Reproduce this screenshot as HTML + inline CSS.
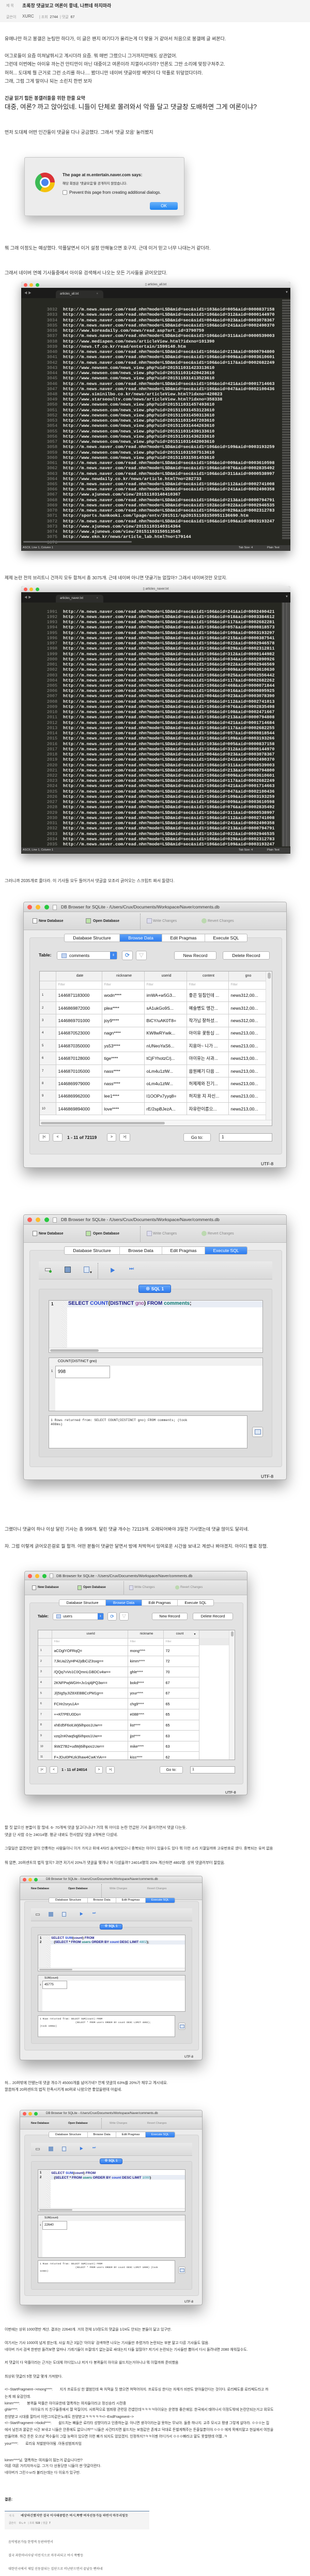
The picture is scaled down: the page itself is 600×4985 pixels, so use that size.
<!DOCTYPE html>
<html><head><meta charset="utf-8">
<style>
*{margin:0;padding:0;box-sizing:border-box}
html,body{width:600px;height:4985px;background:#fff;overflow:hidden}
body{position:relative;font-family:"Liberation Sans","Noto Sans CJK KR",sans-serif;color:#222}
.a{position:absolute}
.t{position:absolute;left:9px;white-space:nowrap;color:#333;line-height:1}
.term{position:absolute;left:41px;width:521px;background:#272822;border-radius:4px 4px 0 0;box-shadow:0 8px 20px rgba(0,0,0,.4);overflow:hidden}
.ttl{position:absolute;left:0;top:0;width:100%;height:12px;background:linear-gradient(#ececec,#d6d6d6);font-size:6px;color:#444;text-align:center;line-height:12px}
.lt{position:absolute;border-radius:50%}
.tabbar{position:absolute;left:0;top:12px;width:100%;height:20px;background:#1b1b1a}
.tab{position:absolute;left:67px;top:5px;width:92px;height:15px;background:#2d2d2b;border-radius:5px 5px 0 0;font-size:6px;color:#ddd;line-height:15px;padding-left:8px}
.code{position:absolute;left:0;top:32px;font-family:"Liberation Mono",monospace;font-size:8.43px;line-height:10.24px;white-space:pre;font-weight:bold}
.ln{position:absolute;left:0;width:70px;text-align:right;color:#8f908a;font-family:"Liberation Mono",monospace;font-size:8.43px;line-height:10.24px;white-space:pre;font-weight:normal}
.tx{position:absolute;left:81px;color:#f4f4ee}
.mini{position:absolute;left:505px;width:47px;background:repeating-linear-gradient(#6a6a66 0 1px,#3a3a37 1px 2px,#55554f 2px 3px,#2a2a28 3px 5px)}
.status{position:absolute;left:0;width:100%;height:11px;background:#3c3c3a;color:#ddd;font-size:5.5px;line-height:11px}
.win{position:absolute;background:#ececec;border:1px solid #b0b0b0;border-radius:4px;box-shadow:0 12px 28px rgba(0,0,0,.38);overflow:hidden;color:#111}
.wt{position:absolute;left:0;top:0;width:100%;background:linear-gradient(#ebebeb,#d5d5d5);border-bottom:1px solid #b8b8b8;color:#333;white-space:nowrap}
.wb{position:absolute;left:0;width:100%;background:linear-gradient(#e8e8e8,#d9d9d9);border-bottom:1px solid #bdbdbd;white-space:nowrap}
.panel{position:absolute;background:#e2e2e2;border:1px solid #d2d2d2;border-radius:4px}
.tabs{position:absolute;display:flex;border:1px solid #b9b9b9;border-radius:3px;background:#fff;overflow:hidden;white-space:nowrap}
.tabs div{border-right:1px solid #c8c8c8;text-align:center;color:#111}
.tabs .on{background:linear-gradient(#5ea1f7,#2d7cf0);color:#fff}
.btn{position:absolute;background:#fff;border:1px solid #b5b5b5;border-radius:3px;text-align:center;color:#111;white-space:nowrap}
.grid{position:absolute;background:#fff;border:1px solid #aaa;overflow:hidden}
table{border-collapse:collapse;table-layout:fixed}
td,th{border-right:1px solid #cfcfcf;border-bottom:1px solid #cfcfcf;white-space:nowrap;overflow:hidden;text-align:left;font-weight:normal;padding-left:4px}
th{background:#f1f1f1;text-align:center;color:#222}
.rn{background:#f3f3f3;color:#222}
.fl{color:#aaa;background:#fff}
.box{position:absolute;background:#fff;border:1px solid #a9a9a9}
.gut{position:absolute;top:0;height:100%;background:#efefef}
.hatch{position:absolute;top:0;height:100%;background:repeating-linear-gradient(45deg,#e6e6e6 0 1px,#f3f3f3 1px 3px)}
.kw{color:#1b1b86;font-weight:bold}.fn{color:#1f3fcf;font-weight:bold}.pu{color:#7d1a7d}.tl{color:#0f7a72;font-weight:bold}
.pill{position:absolute;background:linear-gradient(#64a6f8,#2f7bef);border:1px solid #2a66c8;border-radius:3px;color:#fff;font-weight:bold;text-align:center;white-space:nowrap}
.mono{font-family:"Liberation Mono",monospace;color:#333;white-space:pre}
</style></head><body>

<!-- header -->
<div class="a" style="left:0;top:0;width:600px;height:43px;background:#f4f4f4"></div>
<div class="t" style="left:12px;top:8px;font-size:7px;color:#999">제 목</div>
<div class="t" style="left:43px;top:7px;font-size:9px;font-weight:bold;color:#333">초록창 댓글보고 여론이 좋네, 나쁘네 하지마라</div>
<div class="t" style="left:12px;top:30px;font-size:7px;color:#999">글쓴이</div>
<div class="t" style="left:43px;top:28px;font-size:8px;color:#555">XURC</div>
<div class="t" style="left:76px;top:30px;font-size:7px;color:#999">| 조회 &nbsp;<span style="color:#444">2744</span> &nbsp;| 댓글 &nbsp;<span style="color:#444">67</span></div>

<div class="t" style="top:71px;font-size:9px">유애나만 하고 봉갤은 눈팅만 하다가, 이 글은 왠지 여기다가 올리는게 더 맞을 거 같아서 처음으로 봉갤에 글 써본다.</div>
<div class="t" style="top:104px;font-size:9px">어그로들이 요즘 미쳐날뛰시고 계시더라 요즘. 뭐 매번 그랬으니 그거까지만해도 상관없어.</div>
<div class="t" style="top:120px;font-size:9px">그런데 이번에는 아이유 까는건 안티만이 아닌 대중이고 여론이라 지껄이시더라? 언론도 그딴 소리에 맞장구쳐주고.</div>
<div class="t" style="top:137px;font-size:9px">허허... 도대체 뭘 근거로 그런 소리를 하나.... 봤더니만 네이버 댓글이랑 베댓이 다 악플로 뒤덮었다더라.</div>
<div class="t" style="top:153px;font-size:9px">그래, 그럼 그게 말이나 되는 소린지 한번 보자</div>
<div class="t" style="top:186px;font-size:9px;font-weight:bold">긴글 읽기 힘든 봉갤러들을 위한 한줄 요약</div>
<div class="t" style="top:201px;font-size:12.5px;color:#222">대중, 여론? 까고 앉아있네. 니들이 단체로 몰려와서 악플 달고 댓글창 도배하면 그게 여론이냐?</div>
<div class="t" style="top:252px;font-size:9px">먼저 도대체 어떤 인간들이 댓글을 다나 궁금했다. 그래서 '댓글 모음' 눌러봤지</div>

<!-- chrome dialog -->
<div class="a" style="left:47px;top:304px;width:310px;height:114px;background:#ececec;border:1px solid #c5c5c5;border-radius:3px;box-shadow:0 10px 22px rgba(0,0,0,.3)">
  <div class="a" style="left:20px;top:29px;width:38px;height:38px;border-radius:50%;background:conic-gradient(from -30deg,#db3236 0 120deg,#f4c20d 120deg 240deg,#3cba54 240deg 360deg)"></div>
  <div class="a" style="left:29px;top:38px;width:20px;height:20px;border-radius:50%;background:#fff"></div>
  <div class="a" style="left:32px;top:41px;width:14px;height:14px;border-radius:50%;background:#4885ed"></div>
  <div class="a" style="left:73px;top:29px;font-size:8px;font-weight:bold;white-space:nowrap">The page at m.entertain.naver.com says:</div>
  <div class="a" style="left:73px;top:44px;font-size:6.5px;white-space:nowrap">해당 회원은 '댓글모음'을 공개하지 않았습니다.</div>
  <div class="a" style="left:73px;top:63px;width:9px;height:9px;background:#fff;border:1px solid #999;border-radius:2px"></div>
  <div class="a" style="left:86px;top:63px;font-size:8px;white-space:nowrap;color:#222">Prevent this page from creating additional dialogs.</div>
  <div class="a" style="left:242px;top:86px;width:54px;height:15px;background:linear-gradient(#6cb3fa,#1f84f0);border-radius:3px;color:#fff;font-size:8px;text-align:center;line-height:15px">OK</div>
</div>

<div class="t" style="top:476px;font-size:9px">뭐 그래 이정도는 예상했다. 악플달면서 이거 설정 안해놓으면 호구지. 근데 이거 믿고 너무 나대는거 같더라.</div>
<div class="t" style="top:524px;font-size:9px">그래서 네이버 연예 기사들중에서 아이유 검색해서 나오는 모든 기사들을 긁어모았다.</div>

<!-- terminal 1 -->
<div class="term" style="top:545px;height:521px">
  <div class="ttl">▯ articles_all.txt</div>
  <div class="lt" style="left:5px;top:2.5px;width:7px;height:7px;background:#fc5f57"></div>
  <div class="lt" style="left:16px;top:2.5px;width:7px;height:7px;background:#fdbc2e"></div>
  <div class="lt" style="left:28px;top:2.5px;width:7px;height:7px;background:#28c840"></div>
  <div class="tabbar"><div class="a" style="left:6px;top:5px;color:#888;font-size:6px">◀ ▶</div><div class="tab">articles_all.txt<span style="position:absolute;right:10px;color:#888">×</span></div><div class="a" style="right:4px;top:6px;color:#aaa;font-size:6px">▼</div></div>
  <div class="mini" style="top:35px;height:464px"></div>
  <div class="code" style="top:39px">
<div class="ln">3032
3033
3034
3035
3036
3037
3038
3039
3040
3041
3042
3043
3044
3045
3046
3047
3048
3049
3050
3051
3052
3053
3054
3055
3056
3057
3058
3059
3060
3061
3062
3063
3064
3065
3066
3067
3068
3069
3070
3071
3072
3073
3074
3075
3076</div><div class="tx">http://m.news.naver.com/read.nhn?mode=LSD&amp;mid=sec&amp;sid1=103&amp;oid=005&amp;aid=0000837158
http://m.news.naver.com/read.nhn?mode=LSD&amp;mid=sec&amp;sid1=106&amp;oid=312&amp;aid=0000144970
http://m.news.naver.com/read.nhn?mode=LSD&amp;mid=sec&amp;sid1=004&amp;oid=023&amp;aid=0003078367
http://m.news.naver.com/read.nhn?mode=LSD&amp;mid=sec&amp;sid1=106&amp;oid=241&amp;aid=0002490370
http://www.koreadaily.com/news/read.asp?art_id=3790759
http://m.news.naver.com/read.nhn?mode=LSD&amp;mid=sec&amp;sid1=106&amp;oid=311&amp;aid=0000539003
http://www.mediapen.com/news/articleView.html?idxno=101390
http://news.tf.co.kr/read/entertain/1599140.htm
http://m.news.naver.com/read.nhn?mode=LSD&amp;mid=sec&amp;sid1=106&amp;oid=213&amp;aid=0000794800
http://m.news.naver.com/read.nhn?mode=LSD&amp;mid=sec&amp;sid1=106&amp;oid=009&amp;aid=0003610601
http://m.news.naver.com/read.nhn?mode=LSD&amp;mid=sec&amp;sid1=106&amp;oid=117&amp;aid=0002682249
http://www.newsen.com/news_view.php?uid=201511031423313610
http://www.newsen.com/news_view.php?uid=201511031420423610
http://www.newsen.com/news_view.php?uid=201511031413523610
http://m.news.naver.com/read.nhn?mode=LSD&amp;mid=sec&amp;sid1=106&amp;oid=421&amp;aid=0001714663
http://m.news.naver.com/read.nhn?mode=LSD&amp;mid=sec&amp;sid1=106&amp;oid=047&amp;aid=0002100436
http://www.siminilbo.co.kr/news/articleView.html?idxno=420823
http://www.starseoultv.com/news/articleView.html?idxno=358338
http://www.newsen.com/news_view.php?uid=201511031457493610
http://www.newsen.com/news_view.php?uid=201511031453123610
http://www.newsen.com/news_view.php?uid=201511031450313610
http://www.newsen.com/news_view.php?uid=201511031447203610
http://www.newsen.com/news_view.php?uid=201511031444263610
http://www.newsen.com/news_view.php?uid=201511031439133610
http://www.newsen.com/news_view.php?uid=201511031436233610
http://www.newsen.com/news_view.php?uid=201511031442003610
http://m.news.naver.com/read.nhn?mode=LSD&amp;mid=sec&amp;sid1=106&amp;oid=109&amp;aid=0003193259
http://www.newsen.com/news_view.php?uid=201511031507513610
http://www.newsen.com/news_view.php?uid=201511031501453610
http://m.news.naver.com/read.nhn?mode=LSD&amp;mid=sec&amp;sid1=106&amp;oid=009&amp;aid=0003610598
http://m.news.naver.com/read.nhn?mode=LSD&amp;mid=sec&amp;sid1=106&amp;oid=076&amp;aid=0002835492
http://m.news.naver.com/read.nhn?mode=LSD&amp;mid=sec&amp;sid1=106&amp;oid=311&amp;aid=0000538997
http://www.newdaily.co.kr/news/article.html?no=282733
http://m.news.naver.com/read.nhn?mode=LSD&amp;mid=sec&amp;sid1=106&amp;oid=112&amp;aid=0002741008
http://m.news.naver.com/read.nhn?mode=LSD&amp;mid=sec&amp;sid1=106&amp;oid=241&amp;aid=0002490358
http://www.ajunews.com/view/20151103140410367
http://m.news.naver.com/read.nhn?mode=LSD&amp;mid=sec&amp;sid1=106&amp;oid=213&amp;aid=0000794791
http://m.news.naver.com/read.nhn?mode=LSD&amp;mid=sec&amp;sid1=102&amp;oid=022&amp;aid=0002946535
http://m.news.naver.com/read.nhn?mode=LSD&amp;mid=sec&amp;sid1=106&amp;oid=029&amp;aid=0002312783
http://sports.hankooki.com/lpage/entv/201511/sp20151103150951136690.htm
http://m.news.naver.com/read.nhn?mode=LSD&amp;mid=sec&amp;sid1=106&amp;oid=109&amp;aid=0003193247
http://www.ajunews.com/view/20151103140314364
http://www.ajunews.com/view/20151103150513545
http://www.ekn.kr/news/article_lab.html?no=179144
</div></div>
  <div class="a" style="left:4px;top:502px;width:210px;height:3px;background:#666;border-radius:2px"></div>
  <div class="status" style="top:510px"><span style="margin-left:3px">ASCII, Line 1, Column 1</span><span class="a" style="left:421px">Tab Size: 4</span><span class="a" style="left:476px">Plain Text</span></div>
</div>

<div class="t" style="top:1114px;font-size:8.6px">제제 논란 전의 브리트니 건까지 모두 합쳐서 총 3075개. 근데 네이버 아니면 댓글기능 없잖아? 그래서 네이버것만 모았지.</div>

<!-- terminal 2 -->
<div class="term" style="top:1134px;height:518px">
  <div class="ttl">▯ articles_naver.txt</div>
  <div class="lt" style="left:5px;top:2.5px;width:7px;height:7px;background:#fc5f57"></div>
  <div class="lt" style="left:16px;top:2.5px;width:7px;height:7px;background:#fdbc2e"></div>
  <div class="lt" style="left:28px;top:2.5px;width:7px;height:7px;background:#28c840"></div>
  <div class="tabbar"><div class="a" style="left:6px;top:5px;color:#888;font-size:6px">◀ ▶</div><div class="tab">articles_naver.txt<span style="position:absolute;right:10px;color:#888">×</span></div><div class="a" style="right:4px;top:6px;color:#aaa;font-size:6px">▼</div></div>
  <div class="mini" style="top:32px;height:472px;background:repeating-linear-gradient(90deg,#777 0 1px,#3a3a37 1px 3px,#999 3px 4px,#2e2e2c 4px 6px)"></div>
  <div class="code" style="top:34.5px">
<div class="ln">1991
1992
1993
1994
1995
1996
1997
1998
1999
2000
2001
2002
2003
2004
2005
2006
2007
2008
2009
2010
2011
2012
2013
2014
2015
2016
2017
2018
2019
2020
2021
2022
2023
2024
2025
2026
2027
2028
2029
2030
2031
2032
2033
2034
2035
2036</div><div class="tx">http://m.news.naver.com/read.nhn?mode=LSD&amp;mid=sec&amp;sid1=106&amp;oid=241&amp;aid=0002490421
http://m.news.naver.com/read.nhn?mode=LSD&amp;mid=sec&amp;sid1=106&amp;oid=018&amp;aid=0003384612
http://m.news.naver.com/read.nhn?mode=LSD&amp;mid=sec&amp;sid1=106&amp;oid=117&amp;aid=0002682281
http://m.news.naver.com/read.nhn?mode=LSD&amp;mid=sec&amp;sid1=106&amp;oid=057&amp;aid=0000818573
http://m.news.naver.com/read.nhn?mode=LSD&amp;mid=sec&amp;sid1=106&amp;oid=109&amp;aid=0003193297
http://m.news.naver.com/read.nhn?mode=LSD&amp;mid=sec&amp;sid1=106&amp;oid=215&amp;aid=0000387541
http://m.news.naver.com/read.nhn?mode=LSD&amp;mid=sec&amp;sid1=106&amp;oid=022&amp;aid=0002946578
http://m.news.naver.com/read.nhn?mode=LSD&amp;mid=sec&amp;sid1=106&amp;oid=029&amp;aid=0002312811
http://m.news.naver.com/read.nhn?mode=LSD&amp;mid=sec&amp;sid1=106&amp;oid=312&amp;aid=0000144982
http://m.news.naver.com/read.nhn?mode=LSD&amp;mid=sec&amp;sid1=103&amp;oid=034&amp;aid=0002890926
http://m.news.naver.com/read.nhn?mode=LSD&amp;mid=sec&amp;sid1=106&amp;oid=022&amp;aid=0002946569
http://m.news.naver.com/read.nhn?mode=LSD&amp;mid=sec&amp;sid1=106&amp;oid=009&amp;aid=0003610630
http://m.news.naver.com/read.nhn?mode=LSD&amp;mid=sec&amp;sid1=106&amp;oid=025&amp;aid=0002556442
http://m.news.naver.com/read.nhn?mode=LSD&amp;mid=sec&amp;sid1=106&amp;oid=117&amp;aid=0002682262
http://m.news.naver.com/read.nhn?mode=LSD&amp;mid=sec&amp;sid1=106&amp;oid=468&amp;aid=0000071844
http://m.news.naver.com/read.nhn?mode=LSD&amp;mid=sec&amp;sid1=106&amp;oid=016&amp;aid=0000895925
http://m.news.naver.com/read.nhn?mode=LSD&amp;mid=sec&amp;sid1=004&amp;oid=023&amp;aid=0003078390
http://m.news.naver.com/read.nhn?mode=LSD&amp;mid=sec&amp;sid1=106&amp;oid=112&amp;aid=0002741013
http://m.news.naver.com/read.nhn?mode=LSD&amp;mid=sec&amp;sid1=106&amp;oid=076&amp;aid=0002835498
http://m.news.naver.com/read.nhn?mode=LSD&amp;mid=sec&amp;sid1=106&amp;oid=108&amp;aid=0002471667
http://m.news.naver.com/read.nhn?mode=LSD&amp;mid=sec&amp;sid1=106&amp;oid=213&amp;aid=0000794808
http://m.news.naver.com/read.nhn?mode=LSD&amp;mid=sec&amp;sid1=106&amp;oid=421&amp;aid=0001714684
http://m.news.naver.com/read.nhn?mode=LSD&amp;mid=sec&amp;sid1=106&amp;oid=117&amp;aid=0002682255
http://m.news.naver.com/read.nhn?mode=LSD&amp;mid=sec&amp;sid1=106&amp;oid=057&amp;aid=0000818544
http://m.news.naver.com/read.nhn?mode=LSD&amp;mid=sec&amp;sid1=106&amp;oid=109&amp;aid=0003193266
http://m.news.naver.com/read.nhn?mode=LSD&amp;mid=sec&amp;sid1=103&amp;oid=005&amp;aid=0000837158
http://m.news.naver.com/read.nhn?mode=LSD&amp;mid=sec&amp;sid1=106&amp;oid=312&amp;aid=0000144970
http://m.news.naver.com/read.nhn?mode=LSD&amp;mid=sec&amp;sid1=004&amp;oid=023&amp;aid=0003078367
http://m.news.naver.com/read.nhn?mode=LSD&amp;mid=sec&amp;sid1=106&amp;oid=241&amp;aid=0002490370
http://m.news.naver.com/read.nhn?mode=LSD&amp;mid=sec&amp;sid1=106&amp;oid=311&amp;aid=0000539003
http://m.news.naver.com/read.nhn?mode=LSD&amp;mid=sec&amp;sid1=106&amp;oid=213&amp;aid=0000794800
http://m.news.naver.com/read.nhn?mode=LSD&amp;mid=sec&amp;sid1=106&amp;oid=009&amp;aid=0003610601
http://m.news.naver.com/read.nhn?mode=LSD&amp;mid=sec&amp;sid1=106&amp;oid=117&amp;aid=0002682249
http://m.news.naver.com/read.nhn?mode=LSD&amp;mid=sec&amp;sid1=106&amp;oid=421&amp;aid=0001714663
http://m.news.naver.com/read.nhn?mode=LSD&amp;mid=sec&amp;sid1=106&amp;oid=047&amp;aid=0002100436
http://m.news.naver.com/read.nhn?mode=LSD&amp;mid=sec&amp;sid1=106&amp;oid=109&amp;aid=0003193259
http://m.news.naver.com/read.nhn?mode=LSD&amp;mid=sec&amp;sid1=106&amp;oid=009&amp;aid=0003610598
http://m.news.naver.com/read.nhn?mode=LSD&amp;mid=sec&amp;sid1=106&amp;oid=076&amp;aid=0002835492
http://m.news.naver.com/read.nhn?mode=LSD&amp;mid=sec&amp;sid1=106&amp;oid=311&amp;aid=0000538997
http://m.news.naver.com/read.nhn?mode=LSD&amp;mid=sec&amp;sid1=106&amp;oid=112&amp;aid=0002741008
http://m.news.naver.com/read.nhn?mode=LSD&amp;mid=sec&amp;sid1=106&amp;oid=241&amp;aid=0002490358
http://m.news.naver.com/read.nhn?mode=LSD&amp;mid=sec&amp;sid1=106&amp;oid=213&amp;aid=0000794791
http://m.news.naver.com/read.nhn?mode=LSD&amp;mid=sec&amp;sid1=102&amp;oid=022&amp;aid=0002946535
http://m.news.naver.com/read.nhn?mode=LSD&amp;mid=sec&amp;sid1=106&amp;oid=029&amp;aid=0002312783
http://m.news.naver.com/read.nhn?mode=LSD&amp;mid=sec&amp;sid1=106&amp;oid=109&amp;aid=0003193247
</div></div>
  <div class="status" style="top:506px"><span style="margin-left:3px">ASCII, Line 1, Column 1</span><span class="a" style="left:421px">Tab Size: 4</span><span class="a" style="left:476px">Plain Text</span></div>
</div>

<div class="t" style="top:1701px;font-size:8px">그러니까 2035개로 줄더라. 이 기사들 모두 들어가서 댓글을 모조리 긁어오는 스크립트 짜서 돌렸다.</div>

<!-- DB window 1 : browse comments -->
<div class="win" style="left:45px;top:1745px;width:510px;height:515px">
  <div class="wt" style="height:19px;font-size:8.5px;line-height:19px"><span class="a" style="left:72px">DB Browser for SQLite - /Users/Crux/Documents/Workspace/Naver/comments.db</span></div>
  <div class="lt" style="left:7px;top:5px;width:9px;height:9px;background:#fc5f57"></div>
  <div class="lt" style="left:23px;top:5px;width:9px;height:9px;background:#fdbc2e"></div>
  <div class="lt" style="left:40px;top:5px;width:9px;height:9px;background:#28c840"></div>
  <div class="a" style="left:56px;top:5px;width:8px;height:10px;background:#fff;border:1px solid #aaa"></div>
  <div class="wb" style="top:19px;height:35px;font-size:7px;line-height:35px;font-weight:bold;color:#222">
    <span class="a" style="left:17px;top:12px;width:9px;height:10px;border:1px solid #888;background:#fff"></span><span class="a" style="left:29px">New Database</span>
    <span class="a" style="left:120px;top:12px;width:10px;height:10px;border:1px solid #888;background:#bde3a8"></span><span class="a" style="left:134px">Open Database</span>
    <span class="a" style="left:225px;top:3px;height:30px;border-left:1px dotted #999"></span>
    <span class="a" style="left:238px;top:12px;width:10px;height:10px;border:1px solid #aab;background:#dde"></span><span class="a" style="left:250px;color:#888;font-weight:normal">Write Changes</span>
    <span class="a" style="left:344px;top:12px;width:10px;height:10px;border-radius:50%;background:#bcd9b0"></span><span class="a" style="left:356px;color:#888;font-weight:normal">Revert Changes</span>
  </div>
  <div class="panel" style="left:11px;top:68px;width:489px;height:420px"></div>
  <div class="tabs" style="left:78px;top:61px;height:16px;font-size:8.5px;line-height:14px"><div style="width:107px">Database Structure</div><div class="on" style="width:82px">Browse Data</div><div style="width:83px">Edit Pragmas</div><div style="width:81px;border:0">Execute SQL</div></div>
  <div class="a" style="left:29px;top:97px;font-size:8.5px;font-weight:bold">Table:</div>
  <div class="btn" style="left:64px;top:95px;width:117px;height:16px;text-align:left;font-size:8.5px;line-height:14px;padding-left:23px">comments<span class="a" style="left:8px;top:3px;width:10px;height:9px;background:#c6d7f2;border:1px solid #7c9cd0"></span><span class="a" style="right:0;top:0;width:13px;height:14px;background:#3d86ee;color:#fff;font-size:6px;line-height:14px;text-align:center">⇕</span></div>
  <div class="btn" style="left:190px;top:94px;width:21px;height:18px;color:#2a77d8;font-size:11px;line-height:16px">⟳</div>
  <div class="btn" style="left:217px;top:94px;width:21px;height:18px;color:#999;font-size:9px;line-height:16px">▽</div>
  <div class="btn" style="left:291px;top:95px;width:82px;height:16px;font-size:8.5px;line-height:14px">New Record</div>
  <div class="btn" style="left:385px;top:95px;width:91px;height:16px;font-size:8.5px;line-height:14px">Delete Record</div>
  <div class="grid" style="left:30px;top:133px;width:451px;height:300px">
    <table style="font-size:8.5px;width:438px">
      <colgroup><col style="width:31px"><col style="width:89px"><col style="width:82px"><col style="width:82px"><col style="width:81px"><col style="width:73px"></colgroup>
      <tr style="height:18px;font-size:7px"><th></th><th>date</th><th>nickname</th><th>userid</th><th>content</th><th>gno</th></tr>
      <tr style="height:16px;font-size:6px"><td class="rn"></td><td class="fl">Filter</td><td class="fl">Filter</td><td class="fl">Filter</td><td class="fl">Filter</td><td class="fl">Filter</td></tr>
      <tr style="height:24.4px"><td class="rn" style="font-size:6px">1</td><td>1446871183000</td><td>wodn****</td><td>imWA+w5G3...</td><td>좋은 일침인데 ...</td><td>news312,00...</td></tr>
      <tr style="height:24.4px"><td class="rn" style="font-size:6px">2</td><td>1446869872000</td><td>plea****</td><td>sA1ukGo9S...</td><td>예술병도 엥간...</td><td>news312,00...</td></tr>
      <tr style="height:24.4px"><td class="rn" style="font-size:6px">3</td><td>1446869701000</td><td>joy9****</td><td>BiCY/uAK0T8=</td><td>작가님 잘하셨...</td><td>news312,00...</td></tr>
      <tr style="height:24.4px"><td class="rn" style="font-size:6px">4</td><td>1446870523000</td><td>nagn****</td><td>KW8wRYwik...</td><td>아이유 꽃등심 ...</td><td>news213,00...</td></tr>
      <tr style="height:24.4px"><td class="rn" style="font-size:6px">5</td><td>1446870350000</td><td>ys53****</td><td>nUNeoYaS6...</td><td>지용아~ 니가 ...</td><td>news213,00...</td></tr>
      <tr style="height:24.4px"><td class="rn" style="font-size:6px">6</td><td>1446870128000</td><td>tige****</td><td>tCjFYhotzC/j...</td><td>아이유는 사과...</td><td>news213,00...</td></tr>
      <tr style="height:24.4px"><td class="rn" style="font-size:6px">7</td><td>1446870105000</td><td>nass****</td><td>oLm4u1zlW...</td><td>음원폐기 다음 ...</td><td>news213,00...</td></tr>
      <tr style="height:24.4px"><td class="rn" style="font-size:6px">8</td><td>1446869979000</td><td>nass****</td><td>oLm4u1zlW...</td><td>허제제와 진기...</td><td>news213,00...</td></tr>
      <tr style="height:24.4px"><td class="rn" style="font-size:6px">9</td><td>1446869962000</td><td>lee1****</td><td>I1OOPx7yyq8=</td><td>허지웅 지 자신...</td><td>news213,00...</td></tr>
      <tr style="height:24.4px"><td class="rn" style="font-size:6px">10</td><td>1446869894000</td><td>love****</td><td>rE/2spBJezA...</td><td>자유란이름으...</td><td>news213,00...</td></tr>
    </table>
    <div class="a" style="right:0;top:0;width:12px;height:100%;background:#f4f4f4;border-left:1px solid #ddd"><div style="margin:2px 3px;width:6px;height:12px;background:#bbb;border-radius:3px"></div></div>
    <div class="a" style="left:0;bottom:0;width:100%;height:11px;background:#f6f6f6;border-top:1px solid #ddd"><div style="margin:3px 2px;width:240px;height:5px;background:#bbb;border-radius:3px"></div></div>
  </div>
  <div class="btn" style="left:29px;top:447px;width:21px;height:16px;font-size:7px;line-height:14px">|&lt;</div>
  <div class="btn" style="left:56px;top:447px;width:19px;height:16px;font-size:7px;line-height:14px">&lt;</div>
  <div class="a" style="left:84px;top:450px;font-size:8.5px;font-weight:bold;white-space:nowrap">1 - 11 of 72119</div>
  <div class="btn" style="left:161px;top:447px;width:18px;height:16px;font-size:7px;line-height:14px">&gt;</div>
  <div class="btn" style="left:185px;top:447px;width:21px;height:16px;font-size:7px;line-height:14px">&gt;|</div>
  <div class="btn" style="left:309px;top:447px;width:53px;height:16px;font-size:8.5px;line-height:14px">Go to:</div>
  <div class="box" style="left:378px;top:447px;width:103px;height:16px;font-size:8px;line-height:14px;padding-left:4px">1</div>
  <div class="a" style="left:459px;top:501px;font-size:8.5px">UTF-8</div>
</div>

<!-- DB window 2 : execute sql count -->
<div class="win" style="left:45px;top:2350px;width:510px;height:514px">
  <div class="wt" style="height:19px;font-size:8.5px;line-height:19px"><span class="a" style="left:72px">DB Browser for SQLite - /Users/Crux/Documents/Workspace/Naver/comments.db</span></div>
  <div class="lt" style="left:7px;top:5px;width:9px;height:9px;background:#fc5f57"></div>
  <div class="lt" style="left:23px;top:5px;width:9px;height:9px;background:#fdbc2e"></div>
  <div class="lt" style="left:40px;top:5px;width:9px;height:9px;background:#28c840"></div>
  <div class="a" style="left:56px;top:5px;width:8px;height:10px;background:#fff;border:1px solid #aaa"></div>
  <div class="wb" style="top:19px;height:35px;font-size:7px;line-height:35px;font-weight:bold;color:#222">
    <span class="a" style="left:17px;top:12px;width:9px;height:10px;border:1px solid #888;background:#fff"></span><span class="a" style="left:29px">New Database</span>
    <span class="a" style="left:120px;top:12px;width:10px;height:10px;border:1px solid #888;background:#bde3a8"></span><span class="a" style="left:134px">Open Database</span>
    <span class="a" style="left:225px;top:3px;height:30px;border-left:1px dotted #999"></span>
    <span class="a" style="left:238px;top:12px;width:10px;height:10px;border:1px solid #aab;background:#dde"></span><span class="a" style="left:250px;color:#888;font-weight:normal">Write Changes</span>
    <span class="a" style="left:344px;top:12px;width:10px;height:10px;border-radius:50%;background:#bcd9b0"></span><span class="a" style="left:356px;color:#888;font-weight:normal">Revert Changes</span>
  </div>
  <div class="panel" style="left:11px;top:68px;width:489px;height:420px"></div>
  <div class="tabs" style="left:78px;top:61px;height:16px;font-size:8.5px;line-height:14px"><div style="width:107px">Database Structure</div><div style="width:82px">Browse Data</div><div style="width:83px">Edit Pragmas</div><div class="on" style="width:81px;border:0">Execute SQL</div></div>
  <div class="a" style="left:29px;top:90px;width:452px;height:35px;background:linear-gradient(#eaeaea,#dadada);border-bottom:1px solid #c4c4c4">
    <span class="a" style="left:12px;top:13px;width:11px;height:6px;border:1px solid #888;background:#eee"></span><span class="a" style="left:20px;top:17px;width:5px;height:5px;border-radius:50%;background:#3a3"></span>
    <span class="a" style="left:50px;top:10px;width:12px;height:12px;background:#7b9cc9;border:1px solid #456"></span>
    <span class="a" style="left:87px;top:10px;width:11px;height:12px;background:#dfe9f6;border:1px solid #6a8cc0"></span><span class="a" style="left:98px;top:19px;font-size:6px">▼</span>
    <span class="a" style="left:114px;top:3px;height:30px;border-left:1px dotted #999"></span>
    <span class="a" style="left:138px;top:9px;font-size:10px;color:#3a7be0">▶</span>
    <span class="a" style="left:175px;top:9px;font-size:10px;color:#3a7be0">⏭</span>
  </div>
  <div class="a" style="left:29px;top:143px;width:452px;height:326px;background:#dcdcdc;border:1px solid #cfcfcf;border-radius:3px"></div>
  <div class="pill" style="left:222px;top:135px;width:63px;height:16px;font-size:8.5px;line-height:14px">⊗ SQL 1</div>
  <div class="box" style="left:48px;top:165px;width:415px;height:102px;overflow:hidden">
    <div class="gut" style="left:0;width:24px"></div><div class="hatch" style="left:24px;width:11px"></div>
    <div class="a" style="left:35px;top:1px;width:380px;height:12px;background:#e9edf5"></div>
    <div class="a" style="left:4px;top:2px;font-size:8px;font-weight:bold">1</div>
    <div class="a" style="left:37px;top:0px;font-size:10px;white-space:nowrap"><span class="kw">SELECT</span> <span class="fn">COUNT</span><b>(</b><span class="kw">DISTINCT</span> <span class="pu">gno</span><b>)</b> <span class="kw">FROM</span> <span class="tl">comments</span><b>;</b></div>
    <div class="a" style="left:0;bottom:0;width:100%;height:9px;background:#f6f6f6;border-top:1px solid #ddd"><div style="margin:2px 2px;width:94px;height:5px;background:#bbb;border-radius:3px"></div></div>
  </div>
  <div class="box" style="left:48px;top:276px;width:415px;height:104px;overflow:hidden">
    <div class="gut" style="left:0;width:12px"></div>
    <div class="a" style="left:0;top:0;width:100%;height:15px;background:#f1f1f1"></div>
    <div class="a" style="left:17px;top:3px;font-size:7px;white-space:nowrap">COUNT(DISTINCT gno)</div>
    <div class="a" style="left:12px;top:15px;width:106px;height:24px;border:1px solid #aaa;background:#fff"></div>
    <div class="a" style="left:4px;top:23px;font-size:6px">1</div>
    <div class="a" style="left:17px;top:21px;font-size:9px">998</div>
  </div>
  <div class="box mono" style="left:48px;top:388px;width:385px;height:64px;font-size:6.4px;line-height:8px;padding:5px 3px">1 Rows returned from: SELECT COUNT(DISTINCT gno) FROM comments; (took
408ms)</div>
  <div class="btn" style="left:442px;top:410px;width:21px;height:20px;background:#f2f2f2"><span class="a" style="left:4px;top:4px;width:12px;height:10px;background:#dfe9f6;border:1px solid #6a8cc0"></span></div>
  <div class="a" style="left:459px;top:501px;font-size:8.5px">UTF-8</div>
</div>

<div class="t" style="top:2955px;font-size:8.8px">그랬더니 댓글이 하나 이상 달린 기사는 총 998개. 달린 댓글 개수는 72119개. 오래되어봐야 3일전 기사였는데 댓글 많이도 달리네.</div>
<div class="t" style="top:2988px;font-size:8.8px">자. 그럼 이렇게 긁어모은걸로 뭘 할까. 어떤 분들이 댓글만 달면서 방에 처박혀서 잉여로운 시간을 보내고 계셨나 봐야겠지. 아이디 별로 정렬.</div>

<!-- DB window users -->
<div class="win" style="left:47px;top:3040px;width:432px;height:434px">
  <div class="wt" style="height:17px;font-size:7.3px;line-height:17px"><span class="a" style="left:61px">DB Browser for SQLite - /Users/Crux/Documents/Workspace/Naver/comments.db</span></div>
  <div class="lt" style="left:6px;top:4.5px;width:8px;height:8px;background:#fc5f57"></div>
  <div class="lt" style="left:20px;top:4.5px;width:8px;height:8px;background:#fdbc2e"></div>
  <div class="lt" style="left:34px;top:4.5px;width:8px;height:8px;background:#28c840"></div>
  <div class="a" style="left:48px;top:4px;width:7px;height:9px;background:#fff;border:1px solid #aaa"></div>
  <div class="wb" style="top:17px;height:29px;font-size:6px;line-height:29px;font-weight:bold;color:#222">
    <span class="a" style="left:14px;top:10px;width:8px;height:9px;border:1px solid #888;background:#fff"></span><span class="a" style="left:25px">New Database</span>
    <span class="a" style="left:102px;top:10px;width:8px;height:9px;border:1px solid #888;background:#bde3a8"></span><span class="a" style="left:113px">Open Database</span>
    <span class="a" style="left:191px;top:2px;height:25px;border-left:1px dotted #999"></span>
    <span class="a" style="left:202px;top:10px;width:8px;height:9px;border:1px solid #aab;background:#dde"></span><span class="a" style="left:212px;color:#888;font-weight:normal">Write Changes</span>
    <span class="a" style="left:291px;top:10px;width:8px;height:8px;border-radius:50%;background:#bcd9b0"></span><span class="a" style="left:301px;color:#888;font-weight:normal">Revert Changes</span>
  </div>
  <div class="panel" style="left:9px;top:60px;width:414px;height:352px"></div>
  <div class="tabs" style="left:66px;top:54px;height:13px;font-size:7.2px;line-height:11px"><div style="width:90px">Database Structure</div><div class="on" style="width:70px">Browse Data</div><div style="width:69px">Edit Pragmas</div><div style="width:69px;border:0">Execute SQL</div></div>
  <div class="a" style="left:25px;top:82px;font-size:7.3px;font-weight:bold">Table:</div>
  <div class="btn" style="left:54px;top:80px;width:99px;height:14px;text-align:left;font-size:7.3px;line-height:12px;padding-left:19px">users<span class="a" style="left:6px;top:2px;width:9px;height:8px;background:#c6d7f2;border:1px solid #7c9cd0"></span><span class="a" style="right:0;top:0;width:11px;height:12px;background:#3d86ee;color:#fff;font-size:5px;line-height:12px;text-align:center">⇕</span></div>
  <div class="btn" style="left:160px;top:79px;width:18px;height:16px;color:#2a77d8;font-size:9px;line-height:14px">⟳</div>
  <div class="btn" style="left:183px;top:79px;width:18px;height:16px;color:#999;font-size:8px;line-height:14px">▽</div>
  <div class="btn" style="left:246px;top:80px;width:69px;height:14px;font-size:7.3px;line-height:12px">New Record</div>
  <div class="btn" style="left:325px;top:80px;width:78px;height:14px;font-size:7.3px;line-height:12px">Delete Record</div>
  <div class="grid" style="left:25px;top:113px;width:382px;height:252px">
    <table style="font-size:7.3px;width:371px">
      <colgroup><col style="width:26px"><col style="width:147px"><col style="width:69px"><col style="width:69px"><col style="width:60px"></colgroup>
      <tr style="height:15px;font-size:6px"><th></th><th>userid</th><th>nickname</th><th>count <span style="float:right;margin-right:6px">▾</span></th><th style="background:#eee;border:0"></th></tr>
      <tr style="height:14px;font-size:5px"><td class="rn"></td><td class="fl">Filter</td><td class="fl">Filter</td><td class="fl">Filter</td><td style="background:#eaeaea;border:0"></td></tr>
      <tr style="height:20.6px"><td class="rn" style="font-size:5px">1</td><td>aCDglYOFRqQ=</td><td>mong****</td><td>72</td><td style="border:0"></td></tr>
      <tr style="height:20.6px"><td class="rn" style="font-size:5px">2</td><td>7JkUa22yHP42jdbCiZ3sxg==</td><td>kimm****</td><td>72</td><td style="border:0"></td></tr>
      <tr style="height:20.6px"><td class="rn" style="font-size:5px">3</td><td>/QQq7vVo1C0QmnLGBDCv4w==</td><td>ghle****</td><td>70</td><td style="border:0"></td></tr>
      <tr style="height:20.6px"><td class="rn" style="font-size:5px">4</td><td>2KNFPwjWGH+Jv1sj4jPQ3w==</td><td>bokd****</td><td>67</td><td style="border:0"></td></tr>
      <tr style="height:20.6px"><td class="rn" style="font-size:5px">5</td><td>J/j5Ig5yJIZ8XEBBCcPM1g==</td><td>your****</td><td>67</td><td style="border:0"></td></tr>
      <tr style="height:20.6px"><td class="rn" style="font-size:5px">6</td><td>FCHr2sryu1A=</td><td>chg9****</td><td>65</td><td style="border:0"></td></tr>
      <tr style="height:20.6px"><td class="rn" style="font-size:5px">7</td><td>++Kf7PEU0Do=</td><td>e088****</td><td>65</td><td style="border:0"></td></tr>
      <tr style="height:20.6px"><td class="rn" style="font-size:5px">8</td><td>xhEd5F6oILWj6ilhpos1Uw==</td><td>list****</td><td>65</td><td style="border:0"></td></tr>
      <tr style="height:20.6px"><td class="rn" style="font-size:5px">9</td><td>vzq2nKhaq5qj6iIhpos1Uw==</td><td>jjst****</td><td>63</td><td style="border:0"></td></tr>
      <tr style="height:20.6px"><td class="rn" style="font-size:5px">10</td><td>IkWZ7B2+udWj6ilhpos1Uw==</td><td>mike****</td><td>63</td><td style="border:0"></td></tr>
      <tr style="height:20.6px"><td class="rn" style="font-size:5px">11</td><td>F+JDuI0PKzk3haw4CwKYiA==</td><td>kiss****</td><td>62</td><td style="border:0"></td></tr>
    </table>
    <div class="a" style="right:0;top:0;width:11px;height:100%;background:#f4f4f4;border-left:1px solid #ddd"><div style="margin:2px 3px;width:5px;height:10px;background:#bbb;border-radius:3px"></div></div>
  </div>
  <div class="btn" style="left:25px;top:377px;width:17px;height:14px;font-size:6px;line-height:12px">|&lt;</div>
  <div class="btn" style="left:48px;top:377px;width:16px;height:14px;font-size:6px;line-height:12px">&lt;</div>
  <div class="a" style="left:71px;top:379px;font-size:7.3px;font-weight:bold;white-space:nowrap">1 - 11 of 24014</div>
  <div class="btn" style="left:136px;top:377px;width:15px;height:14px;font-size:6px;line-height:12px">&gt;</div>
  <div class="btn" style="left:157px;top:377px;width:17px;height:14px;font-size:6px;line-height:12px">&gt;|</div>
  <div class="btn" style="left:261px;top:377px;width:45px;height:14px;font-size:7.3px;line-height:12px">Go to:</div>
  <div class="box" style="left:320px;top:377px;width:87px;height:14px;font-size:7px;line-height:12px;padding-left:3px">1</div>
  <div class="a" style="left:388px;top:423px;font-size:7.3px">UTF-8</div>
</div>

<div class="t" style="top:3533px;font-size:7.4px">할 짓 없으신 분들이 참 많네. 6- 70개씩 댓글 달고다니냐? 거의 뭐 아이유 논란 언급된 기사 돌아가면서 댓글 다는듯.</div>
<div class="t" style="top:3547px;font-size:7.4px">댓글 단 사람 수는 24014명. 평균 내봐도 한사람당 댓글 3개씩은 다셨네.</div>
<div class="t" style="top:3574px;font-size:7.1px">그럴일은 없겠지만 말이 안통하는 사람들이니 이거 가지고 뒤에 4자리 숨겨져있으니 중복되는 아이디 있을수도 있다 뭐 이런 소리 지껄일까봐 고유번호로 셌다. 중복되는 유저 없음</div>
<div class="t" style="top:3601px;font-size:7.3px">뭐 암튼, 20퍼센트의 법칙 알지? 과연 저기서 20%가 댓글을 몇개나 쳐 다셨을까? 24014명의 20% 계산하면 4802명. 상위 댓글러부터 잘랐음.</div>

<!-- DB window 3 -->
<div class="win" style="left:38px;top:3630px;width:354px;height:357px">
  <div class="wt" style="height:13px;font-size:6px;line-height:13px"><span class="a" style="left:50px">DB Browser for SQLite - /Users/Crux/Documents/Workspace/Naver/comments.db</span></div>
  <div class="lt" style="left:5px;top:3px;width:7px;height:7px;background:#fc5f57"></div>
  <div class="lt" style="left:16px;top:3px;width:7px;height:7px;background:#fdbc2e"></div>
  <div class="lt" style="left:27px;top:3px;width:7px;height:7px;background:#28c840"></div>
  <div class="wb" style="top:13px;height:33px;font-size:5.2px;line-height:23px;font-weight:bold;color:#222">
    <span class="a" style="left:21px">New Database</span><span class="a" style="left:93px">Open Database</span>
    <span class="a" style="left:157px;top:2px;height:28px;border-left:1px dotted #999"></span>
    <span class="a" style="left:173px;color:#888;font-weight:normal">Write Changes</span><span class="a" style="left:246px;color:#888;font-weight:normal">Revert Changes</span>
  </div>
  <div class="panel" style="left:8px;top:48px;width:338px;height:289px"></div>
  <div class="tabs" style="left:55px;top:41px;height:11px;font-size:5.8px;line-height:9px"><div style="width:75px">Database Structure</div><div style="width:55px">Browse Data</div><div style="width:57px">Edit Pragmas</div><div class="on" style="width:56px;border:0">Execute SQL</div></div>
  <div class="a" style="left:21px;top:62px;width:312px;height:25px;background:linear-gradient(#eaeaea,#dadada);border-bottom:1px solid #c4c4c4">
    <span class="a" style="left:9px;top:10px;width:8px;height:4px;border:1px solid #888"></span>
    <span class="a" style="left:34px;top:7px;width:9px;height:9px;background:#7b9cc9"></span>
    <span class="a" style="left:60px;top:7px;width:8px;height:9px;background:#dfe9f6;border:1px solid #6a8cc0"></span>
    <span class="a" style="left:94px;top:6px;font-size:7px;color:#3a7be0">▶</span><span class="a" style="left:119px;top:6px;font-size:7px;color:#3a7be0">⏭</span>
  </div>
  <div class="a" style="left:21px;top:98px;width:312px;height:226px;background:#dcdcdc;border:1px solid #cfcfcf;border-radius:3px"></div>
  <div class="pill" style="left:154px;top:92px;width:44px;height:11px;font-size:6px;line-height:9px">⊗ SQL 1</div>
  <div class="box" style="left:34px;top:113px;width:286px;height:71px;overflow:hidden">
    <div class="gut" style="left:0;width:16px"></div><div class="hatch" style="left:16px;width:8px"></div>
    <div class="a" style="left:24px;top:10px;width:262px;height:8px;background:#e9edf5"></div>
    <div class="a" style="left:3px;top:2px;font-size:6px;font-weight:bold;line-height:8px">1<br>2</div>
    <div class="a" style="left:25px;top:2px;font-size:6.4px;line-height:8px;white-space:nowrap"><span class="kw">SELECT</span> <span class="fn">SUM</span><b>(</b><span class="tl" style="color:#1b1b86">count</span><b>)</b> <span class="kw">FROM</span><br>&nbsp;&nbsp;&nbsp;<b>(</b><span class="kw">SELECT</span> <b>*</b> <span class="kw">FROM</span> <span class="tl">users</span> <span class="kw">ORDER BY</span> <span class="kw" style="color:#1f3fcf">count</span> <span class="kw">DESC LIMIT</span> <span style="color:#1a8a9a">4802</span><b>);</b></div>
    <div class="a" style="left:0;bottom:0;width:100%;height:6px;background:#f6f6f6;border-top:1px solid #ddd"><div style="margin:1px 2px;width:64px;height:3px;background:#bbb;border-radius:2px"></div></div>
  </div>
  <div class="box" style="left:34px;top:191px;width:286px;height:71px;overflow:hidden">
    <div class="gut" style="left:0;width:8px"></div>
    <div class="a" style="left:0;top:0;width:100%;height:10px;background:#f1f1f1"></div>
    <div class="a" style="left:12px;top:2px;font-size:5px;white-space:nowrap">SUM(count)</div>
    <div class="a" style="left:8px;top:10px;width:48px;height:16px;border:1px solid #aaa;background:#fff"></div>
    <div class="a" style="left:3px;top:15px;font-size:4.5px">1</div>
    <div class="a" style="left:12px;top:14px;font-size:6.4px">45775</div>
  </div>
  <div class="box mono" style="left:34px;top:269px;width:266px;height:42px;font-size:4.6px;line-height:7px;padding:3px 3px">1 Rows returned from: SELECT SUM(count) FROM
                         (SELECT * FROM users ORDER BY count DESC LIMIT 4802);
(took 190ms)</div>
  <div class="btn" style="left:306px;top:283px;width:14px;height:14px;background:#f2f2f2"><span class="a" style="left:2px;top:3px;width:9px;height:7px;background:#dfe9f6;border:1px solid #6a8cc0"></span></div>
  <div class="a" style="left:318px;top:347px;font-size:6px">UTF-8</div>
</div>

<div class="t" style="top:4027px;font-size:7.3px">허... 20퍼밖에 안됐는데 댓글 개수가 45000개를 넘어가네? 전체 댓글의 63%를 20%가 채우고 계시네요.</div>
<div class="t" style="top:4040px;font-size:7.3px">깔끔하게 20퍼센트의 법칙 만족시키게 80퍼로 나왔으면 좋았을텐데 아쉽네.</div>

<!-- DB window 4 -->
<div class="win" style="left:38px;top:4083px;width:354px;height:378px">
  <div class="wt" style="height:13px;font-size:6px;line-height:13px"><span class="a" style="left:50px">DB Browser for SQLite - /Users/Crux/Documents/Workspace/Naver/comments.db</span></div>
  <div class="lt" style="left:5px;top:3px;width:7px;height:7px;background:#fc5f57"></div>
  <div class="lt" style="left:16px;top:3px;width:7px;height:7px;background:#fdbc2e"></div>
  <div class="lt" style="left:27px;top:3px;width:7px;height:7px;background:#28c840"></div>
  <div class="wb" style="top:13px;height:24px;font-size:5.2px;line-height:24px;font-weight:bold;color:#222">
    <span class="a" style="left:21px">New Database</span><span class="a" style="left:93px">Open Database</span>
    <span class="a" style="left:157px;top:2px;height:20px;border-left:1px dotted #999"></span>
    <span class="a" style="left:173px;color:#888;font-weight:normal">Write Changes</span><span class="a" style="left:246px;color:#888;font-weight:normal">Revert Changes</span>
  </div>
  <div class="panel" style="left:8px;top:47px;width:338px;height:312px"></div>
  <div class="tabs" style="left:55px;top:41px;height:12px;font-size:5.8px;line-height:10px"><div style="width:75px">Database Structure</div><div style="width:55px">Browse Data</div><div style="width:57px">Edit Pragmas</div><div class="on" style="width:56px;border:0">Execute SQL</div></div>
  <div class="a" style="left:21px;top:63px;width:312px;height:25px;background:linear-gradient(#eaeaea,#dadada);border-bottom:1px solid #c4c4c4">
    <span class="a" style="left:9px;top:10px;width:8px;height:4px;border:1px solid #888"></span>
    <span class="a" style="left:34px;top:7px;width:9px;height:9px;background:#7b9cc9"></span>
    <span class="a" style="left:60px;top:7px;width:8px;height:9px;background:#dfe9f6;border:1px solid #6a8cc0"></span>
    <span class="a" style="left:94px;top:6px;font-size:7px;color:#3a7be0">▶</span><span class="a" style="left:119px;top:6px;font-size:7px;color:#3a7be0">⏭</span>
  </div>
  <div class="a" style="left:21px;top:98px;width:312px;height:249px;background:#dcdcdc;border:1px solid #cfcfcf;border-radius:3px"></div>
  <div class="pill" style="left:154px;top:93px;width:44px;height:11px;font-size:6px;line-height:9px">⊗ SQL 1</div>
  <div class="box" style="left:34px;top:114px;width:286px;height:82px;overflow:hidden">
    <div class="gut" style="left:0;width:16px"></div><div class="hatch" style="left:16px;width:8px"></div>
    <div class="a" style="left:24px;top:10px;width:262px;height:9px;background:#e9edf5"></div>
    <div class="a" style="left:3px;top:2px;font-size:6px;font-weight:bold;line-height:9px">1<br>2</div>
    <div class="a" style="left:25px;top:2px;font-size:6.6px;line-height:9px;white-space:nowrap"><span class="kw">SELECT</span> <span class="fn">SUM</span><b>(</b><span class="tl" style="color:#1b1b86">count</span><b>)</b> <span class="kw">FROM</span><br>&nbsp;&nbsp;&nbsp;<b>(</b><span class="kw">SELECT</span> <b>*</b> <span class="kw">FROM</span> <span class="tl">users</span> <span class="kw">ORDER BY</span> <span class="kw" style="color:#1f3fcf">count</span> <span class="kw">DESC LIMIT</span> <span style="color:#1a8a9a">1000</span><b>)</b></div>
    <div class="a" style="left:0;bottom:0;width:100%;height:6px;background:#f6f6f6;border-top:1px solid #ddd"><div style="margin:1px 2px;width:64px;height:3px;background:#bbb;border-radius:2px"></div></div>
  </div>
  <div class="box" style="left:34px;top:202px;width:286px;height:83px;overflow:hidden">
    <div class="gut" style="left:0;width:8px"></div>
    <div class="a" style="left:0;top:0;width:100%;height:11px;background:#f1f1f1"></div>
    <div class="a" style="left:12px;top:2px;font-size:5px;white-space:nowrap">SUM(count)</div>
    <div class="a" style="left:8px;top:11px;width:48px;height:17px;border:1px solid #aaa;background:#fff"></div>
    <div class="a" style="left:3px;top:16px;font-size:4.5px">1</div>
    <div class="a" style="left:12px;top:15px;font-size:6.4px">22640</div>
  </div>
  <div class="box mono" style="left:34px;top:290px;width:266px;height:44px;font-size:4.6px;line-height:7px;padding:3px 3px">1 Rows returned from: SELECT SUM(count) FROM
                         (SELECT * FROM users ORDER BY count DESC LIMIT 1000) (took
144ms)</div>
  <div class="btn" style="left:306px;top:302px;width:14px;height:14px;background:#f2f2f2"><span class="a" style="left:2px;top:3px;width:9px;height:7px;background:#dfe9f6;border:1px solid #6a8cc0"></span></div>
  <div class="a" style="left:318px;top:368px;font-size:6px">UTF-8</div>
</div>

<div class="t" style="top:4505px;font-size:7px">이번에는 상위 1000명만 계산. 결과는 22640개. 거의 전체 1/3정도의 댓글을 1/24도 안되는 분들이 달고 있구만.</div>
<div class="t" style="top:4531px;font-size:7px">여기서는 기사 1000여 넘게 썼는데, 사실 최근 3일간 '아이유' 검색하면 나오는 기사들만 추렸거라 논란되는 부분 말고 다른 기사들도 많음.</div>
<div class="t" style="top:4544px;font-size:7px">네이버 가서 검색 한번만 돌려보면 얼마나 기레기들이 쓰잘데기 없는걸로 싸대는지 다들 알잖아? 저기서 논란되는 기사들만 뽑아서 다시 돌려내면 2080 채워질수도.</div>
<div class="t" style="top:4569px;font-size:7px">저 댓글이 다 악플이라는 근거는 도대체 어디있느냐 저거 다 봉퀴들이 아이유 쉴드치는거아니냐 뭐 이럴까봐 준비했음</div>
<div class="t" style="top:4596px;font-size:7px">최상위 댓글러 5명 댓글 몇개 가져왔다.</div>
<div class="t" style="top:4622px;font-size:6.9px">&lt;!--StartFragment--&gt;mong****: &nbsp; &nbsp; &nbsp; 지가 프로듀싱 한 앨범인데 욕 처먹을 짓 했으면 쳐먹어야지. 프로듀싱 한다는 자체가 비판도 받아들인다는 것이다. 로리페도를 로리페도라고 까</div>
<div class="t" style="top:4635px;font-size:7px">는게 왜 유감인데.</div>
<div class="t" style="top:4648px;font-size:7px">kimm****: &nbsp; &nbsp; &nbsp; 봉퀴들 악플은 아이유한테 열폭하는 여자들이라고 정신승리 시전중</div>
<div class="t" style="top:4661px;font-size:6.9px">ghle****: &nbsp; &nbsp; &nbsp; &nbsp; &nbsp; &nbsp; 아이유가 지 친구들중에서 젤 악질이지. 사회적으로 범죄랑 관련된 컨셉인데ㅋㅋㅋㅋ아이유는 운영청 좋은애임. 한국에서 태어나서 이정도밖에 논란안되는거고 외모도</div>
<div class="t" style="top:4674px;font-size:7px">찬양받고 시대를 잘타서 이런그지같은노래도 찬양받고ㅋㅋㅋㅋㅋ&lt;!--EndFragment--&gt;</div>
<div class="t" style="top:4687px;font-size:6.9px">&lt;!--StartFragment--&gt;bokd****: &nbsp; &nbsp; &nbsp; 쉴드치는 빠들은 로리타 성향이라고 인증하는걸. 아니면 생각이라는걸 못하는 무뇌아. 둘중 하나지. 교주 모시고 평생 그렇게 살아라. ㅇㅇㅇ는 집</div>
<div class="t" style="top:4700px;font-size:6.9px">에서 남친과 꿀같은 시간 보내고 니들은 안중에도 없으니까^^ 니들은 사건터지면 쉴드치는 보험같은 존재고 덕대로 돈벌게해주는 돈줄일뿐이야.ㅇㅇㅇ 에게 목매지말고 현실에서 여친을</div>
<div class="t" style="top:4713px;font-size:6.9px">만들어봐. 하긴 돈돈 오크냥 멱수들이 그럴 능력이 있으면 이런 빠가 되지도 않았겠지. 인정하지?ㅋㅋ이젠 어디가서 ㅇㅇㅇ빠라고 말도 못할텐데 어쩔..ㅋ</div>
<div class="t" style="top:4726px;font-size:7px">your****: &nbsp; &nbsp; &nbsp; 로리유 처벌받아야됨 .아동성범죄자임</div>
<div class="t" style="top:4758px;font-size:7px">kimm****님. 열폭하는 여자들이 많는거 같습니다만?</div>
<div class="t" style="top:4769px;font-size:7px">여론 여론 거리지마시길. 그거 다 선동당한 니들이 싼 댓글이란다.</div>
<div class="t" style="top:4782px;font-size:7px">네이버가 그린ㅇㅂ라 불리는데는 다 이유가 있구만.</div>
<div class="t" style="top:4834px;font-size:7px;font-weight:bold">결론:</div>

<div class="a" style="left:9px;top:4859px;width:280px;height:36px;background:#f4f4f4;border-top:1px solid #5a7fa6"></div>
<div class="t" style="left:17px;top:4867px;font-size:5px;color:#999;font-family:'Liberation Serif','Noto Serif CJK SC',serif">제 목</div>
<div class="t" style="left:40px;top:4866px;font-size:6.2px;color:#333;font-weight:bold;font-family:'Liberation Serif','Noto Serif CJK SC',serif">예상하긴했지만 결국 이사태중말은 여시,쭉빵 여자선동가들 하면서 마무리될듯</div>
<div class="t" style="left:17px;top:4881px;font-size:5px;color:#999">글쓴이 &nbsp; &nbsp;<span style="color:#555">ㅁㄴㅇ</span> &nbsp; | 조회 &nbsp;<span style="color:#333">519</span> &nbsp;| 댓글 &nbsp;<span style="color:#333">7</span></div>
<div class="t" style="left:16px;top:4917px;font-size:6.2px;color:#444;font-family:'Liberation Serif','Noto Serif CJK SC',serif">음악평론가들 한명씩 등판하면서</div>
<div class="t" style="left:16px;top:4943px;font-size:6.2px;color:#444;font-family:'Liberation Serif','Noto Serif CJK SC',serif">결국 과한마녀사냥 이런식으로 마무리되고 여시 쭉빵등</div>
<div class="t" style="left:16px;top:4969px;font-size:6.2px;color:#444;font-family:'Liberation Serif','Noto Serif CJK SC',serif">대한민국에서 제일 선동잘되는 집단으로 비난받으면서 끝날듯 뻔하네</div>

</body></html>
